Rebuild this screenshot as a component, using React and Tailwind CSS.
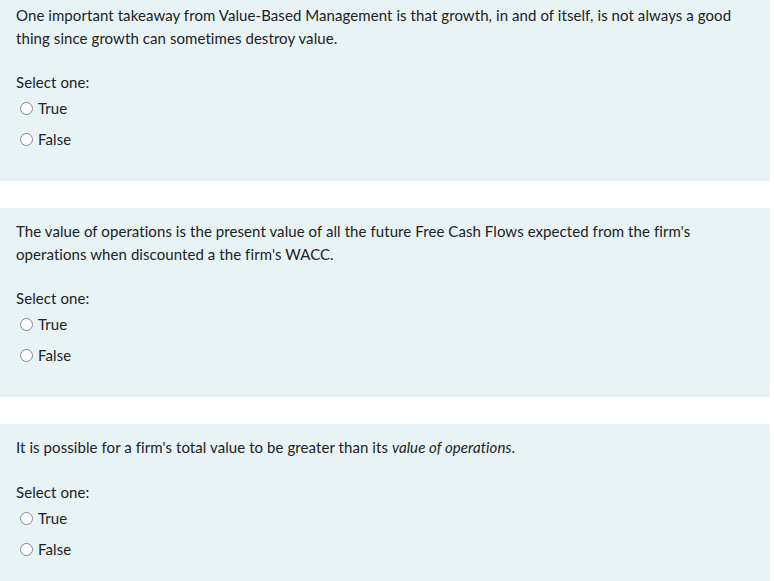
import React from "react";

const questions = [
  {
    id: 1,
    pad: "pt-[4px] pb-[26px]",
    text: (
      <>
        One important takeaway from Value-Based Management is that growth, in and of itself, is not always a good thing since growth can sometimes destroy value.
      </>
    ),
  },
  {
    id: 2,
    pad: "pt-[12px] pb-[26px]",
    text: (
      <>
        The value of operations is the present value of all the future Free Cash Flows expected from the firm's operations when discounted a the firm's WACC.
      </>
    ),
  },
  {
    id: 3,
    pad: "pt-[12px] pb-[26px]",
    text: (
      <>
        It is possible for a firm's total value to be greater than its <em>value of operations</em>.
      </>
    ),
  },
];

const Radio = () => (
  <span className="w-[13px] h-[13px] rounded-full border border-[#8a8a8a] bg-white shrink-0" />
);

const Question = ({ q }) => {
  return (
    <div className={`bg-[#e7f3f5] pl-4 pr-4 ${q.pad}`}>
      <p className="leading-[22.5px]">{q.text}</p>
      <p className="mt-[22px] leading-[22px]">Select one:</p>
      <div className="pl-1">
        <label className="flex items-center gap-[5px] h-[31px]">
          <Radio />
          <span>True</span>
        </label>
        <label className="flex items-center gap-[5px] h-[31px]">
          <Radio />
          <span>False</span>
        </label>
      </div>
    </div>
  );
};

export default function App() {
  return (
    <div className="w-[774px] h-[581px] overflow-hidden bg-white pr-1 text-[15px] tracking-[0.075px] [font-variant-ligatures:none] text-[#1d2125] font-['Lato','Noto_Sans',sans-serif]">
      <div className="flex flex-col gap-[27px]">
        {questions.map((q) => (
          <Question key={q.id} q={q} />
        ))}
      </div>
    </div>
  );
}
